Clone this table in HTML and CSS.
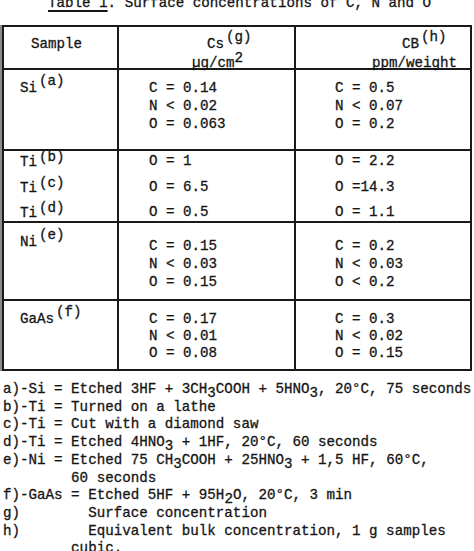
FILE: index.html
```html
<!DOCTYPE html>
<html>
<head>
<meta charset="utf-8">
<link rel="stylesheet" href="styles.css">
</head>
<body>
<div class="page">
  <h1 class="title"><span class="ul">Table 1</span>. Surface concentrations of C, N and O</h1>
  <div class="table">
    <div class="cell c1 head"><div class="l sample">Sample</div></div>
    <div class="cell c2 head">
      <div class="l cs">Cs<span class="sup">(g)</span></div>
      <div class="l ug">µg/cm<span class="sup2">2</span></div>
    </div>
    <div class="cell c3 head">
      <div class="l cb">CB<span class="sup">(h)</span></div>
      <div class="l ppm">ppm/weight</div>
    </div>

    <div class="cell c1 r-si"><div class="l">Si<span class="sup">(a)</span></div></div>
    <div class="cell c2 r-si"><div class="l">C = 0.14</div><div class="l">N &lt; 0.02</div><div class="l">O = 0.063</div></div>
    <div class="cell c3 r-si"><div class="l">C = 0.5</div><div class="l">N &lt; 0.07</div><div class="l">O = 0.2</div></div>

    <div class="cell c1 r-ti"><div class="l">Ti<span class="sup low">(b)</span></div><div class="l">Ti<span class="sup low">(c)</span></div><div class="l">Ti<span class="sup low">(d)</span></div></div>
    <div class="cell c2 r-ti"><div class="l">O = 1</div><div class="l">O = 6.5</div><div class="l">O = 0.5</div></div>
    <div class="cell c3 r-ti"><div class="l">O = 2.2</div><div class="l">O =14.3</div><div class="l">O = 1.1</div></div>

    <div class="cell c1 r-ni"><div class="l">Ni<span class="sup">(e)</span></div></div>
    <div class="cell c2 r-ni"><div class="l">C = 0.15</div><div class="l">N &lt; 0.03</div><div class="l">O = 0.15</div></div>
    <div class="cell c3 r-ni"><div class="l">C = 0.2</div><div class="l">N &lt; 0.03</div><div class="l">O &lt; 0.2</div></div>

    <div class="cell c1 r-ga"><div class="l">GaAs<span class="sup">(f)</span></div></div>
    <div class="cell c2 r-ga"><div class="l">C = 0.17</div><div class="l">N &lt; 0.01</div><div class="l">O = 0.08</div></div>
    <div class="cell c3 r-ga"><div class="l">C = 0.3</div><div class="l">N &lt; 0.02</div><div class="l">O = 0.15</div></div>
  </div>
<pre class="notes">a)-Si = Etched 3HF + 3CH<span class="sub">3</span>COOH + 5HNO<span class="sub">3</span>, 20°C, 75 seconds
b)-Ti = Turned on a lathe
c)-Ti = Cut with a diamond saw
d)-Ti = Etched 4HNO<span class="sub">3</span> + 1HF, 20°C, 60 seconds
e)-Ni = Etched 75 CH<span class="sub">3</span>COOH + 25HNO<span class="sub">3</span> + 1,5 HF, 60°C,
        60 seconds
f)-GaAs = Etched 5HF + 95H<span class="sub">2</span>O, 20°C, 3 min
g)        Surface concentration
h)        Equivalent bulk concentration, 1 g samples
        cubic.</pre>
</div>
</body>
</html>
```

FILE: styles.css
```css
html, body {
  margin: 0;
  padding: 0;
  background: #ffffff;
}

body {
  width: 474px;
  height: 551px;
  overflow: hidden;
  font-family: "Liberation Mono", "DejaVu Sans Mono", monospace;
  font-size: 14.2px;
  line-height: 18px;
  color: #151515;
  -webkit-text-stroke: 0.3px #151515;
}

.page {
  display: flex;
  flex-direction: column;
}

.title {
  margin: -6px 0 0 48px;
  font-size: 14.2px;
  font-weight: normal;
  line-height: 18px;
  white-space: pre;
}

.ul {
  text-decoration: underline;
  text-decoration-thickness: 1.5px;
  text-underline-offset: 2.5px;
}

.table {
  margin: 13px 0 0 2px;
  display: grid;
  grid-template-columns: 115px 177px 176px;
  grid-template-rows: 43px 81px 72px 78px 70px;
  width: max-content;
  border-top: 2px solid #1a1a1a;
  border-left: 2px solid #1a1a1a;
  box-shadow: -2px 0 0 #8c8c8c;
}

.cell {
  box-sizing: border-box;
  border-right: 2px solid #1a1a1a;
  border-bottom: 2px solid #1a1a1a;
  display: flex;
  flex-direction: column;
}

.l {
  line-height: 18px;
  white-space: pre;
}

.sup {
  vertical-align: 7px;
  line-height: 0;
  margin-left: 2px;
}

.sup.low {
  vertical-align: 5px;
}

.sup2 {
  vertical-align: 5px;
  line-height: 0;
}

.sub {
  vertical-align: -4px;
  line-height: 0;
}

/* header */
.head { padding-top: 8px; }
.c1.head { padding-left: 27px; }
.c2.head .cs { padding-left: 58px; }
.c2.head .ug { padding-left: 43px; }
.c3.head .cb { padding-left: 67px; }
.c3.head .ppm { padding-left: 37px; }
.head .ug, .head .ppm { margin-top: 1px; }

/* columns */
.c1 { padding-left: 16px; }
.c2 { padding-left: 30px; }
.c3 { padding-left: 39px; }

/* rows */
.r-si { padding-top: 9px; }
.r-ti { padding-top: 1px; gap: 7.5px; }
.c1.r-ti { padding-top: 2px; }
.r-ni { padding-top: 14px; }
.c1.r-ni { padding-top: 10px; }
.r-ga { padding-top: 10px; }
.r-ga .l { line-height: 17px; }

.notes {
  margin: 10px 0 0 3px;
  font-family: inherit;
  font-size: 14.2px;
  line-height: 17.7px;
  white-space: pre;
}
```
